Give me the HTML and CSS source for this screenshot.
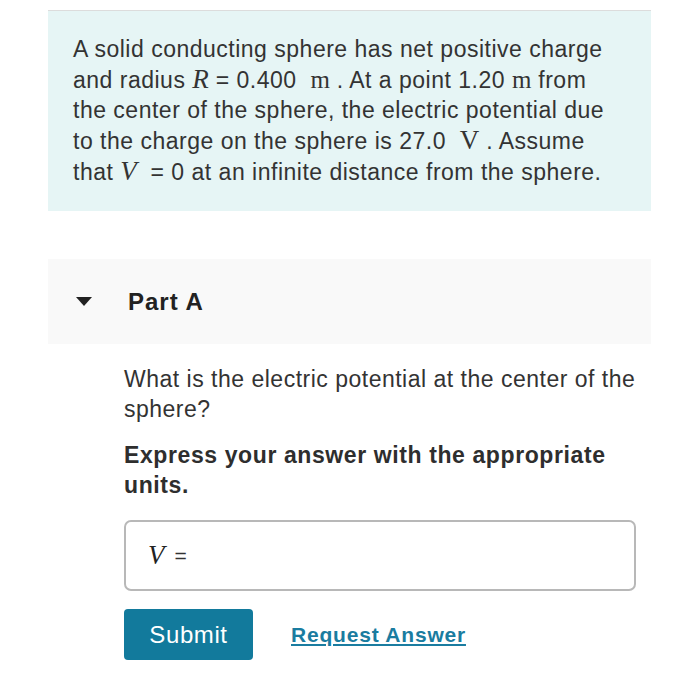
FILE: index.html
```html
<!DOCTYPE html>
<html>
<head>
<meta charset="utf-8">
<link rel="stylesheet" href="styles.css">
</head>
<body>
<div class="page">
  <div class="intro">
    <p>A solid conducting sphere has net positive charge and radius <span class="mi big">R</span> = 0.400 &nbsp;<span class="mn">m</span> . At a point 1.20 <span class="mn">m</span> from the center of the sphere, the electric potential due to the charge on the sphere is 27.0 &nbsp;<span class="mn big">V</span> . Assume that <span class="mi big">V</span> &nbsp;= 0 at an infinite distance from the sphere.</p>
  </div>
  <div class="part-head">
    <span class="tri"></span>
    <span class="part-title">Part A</span>
  </div>
  <div class="part-body">
    <p class="q">What is the electric potential at the center of the sphere?</p>
    <p class="instr">Express your answer with the appropriate units.</p>
    <div class="answer">
      <span class="mi ans-v">V</span><span class="eq">=</span>
    </div>
    <div class="actions">
      <button class="submit">Submit</button>
      <a class="req" href="#">Request Answer</a>
    </div>
  </div>
</div>
</body>
</html>
```
FILE: styles.css
```css
html, body {
  margin: 0;
  padding: 0;
  background: #ffffff;
}
body {
  font-family: "Liberation Sans", Arial, sans-serif;
  color: #333333;
}
.page {
  margin-left: 48px;
  width: 603px;
  padding-top: 10px;
}
.intro {
  background: #e6f5f5;
  border-top: 1px solid #dcdcdc;
  padding: 23px 36px 24px 25px;
}
.intro p {
  margin: 0;
  font-size: 23px;
  line-height: 30px;
  letter-spacing: 0.5px;
}
.mi {
  font-family: "Liberation Serif", "DejaVu Serif", serif;
  font-style: italic;
  letter-spacing: 0;
}
.mn {
  font-family: "Liberation Serif", "DejaVu Serif", serif;
  font-size: 25px;
  letter-spacing: 0;
}
.big {
  font-size: 27px;
}
.part-head {
  margin-top: 48px;
  background: #f9f9f9;
  height: 85px;
  display: flex;
  align-items: center;
}
.tri {
  width: 0;
  height: 0;
  margin-left: 28px;
  border-left: 8px solid transparent;
  border-right: 8px solid transparent;
  border-top: 9px solid #222222;
}
.part-title {
  margin-left: 36px;
  font-size: 24px;
  font-weight: bold;
  letter-spacing: 1px;
  color: #222222;
}
.part-body {
  padding-left: 76px;
  padding-right: 15px;
  padding-top: 20px;
}
.q {
  margin: 0;
  font-size: 23px;
  line-height: 30px;
  letter-spacing: 0.5px;
}
.instr {
  margin: 16px 0 0 0;
  font-size: 23px;
  line-height: 30px;
  font-weight: bold;
  letter-spacing: 0.6px;
  color: #2e2e2e;
}
.answer {
  margin-top: 20px;
  height: 67px;
  border: 2px solid #b8b8b8;
  border-radius: 7px;
  display: flex;
  align-items: center;
  padding-left: 22px;
}
.ans-v {
  font-size: 27px;
  color: #222222;
}
.eq {
  margin-left: 10px;
  font-size: 21px;
}
.actions {
  margin-top: 18px;
  display: flex;
  align-items: center;
}
.submit {
  width: 129px;
  height: 51px;
  background: #127a9c;
  color: #ffffff;
  border: none;
  border-radius: 4px;
  font-family: "Liberation Sans", Arial, sans-serif;
  font-size: 24px;
  letter-spacing: 0.6px;
  padding: 0;
}
.req {
  margin-left: 38px;
  color: #1a7ca0;
  font-size: 21px;
  font-weight: bold;
  letter-spacing: 0.8px;
  text-decoration: underline;
}
```
